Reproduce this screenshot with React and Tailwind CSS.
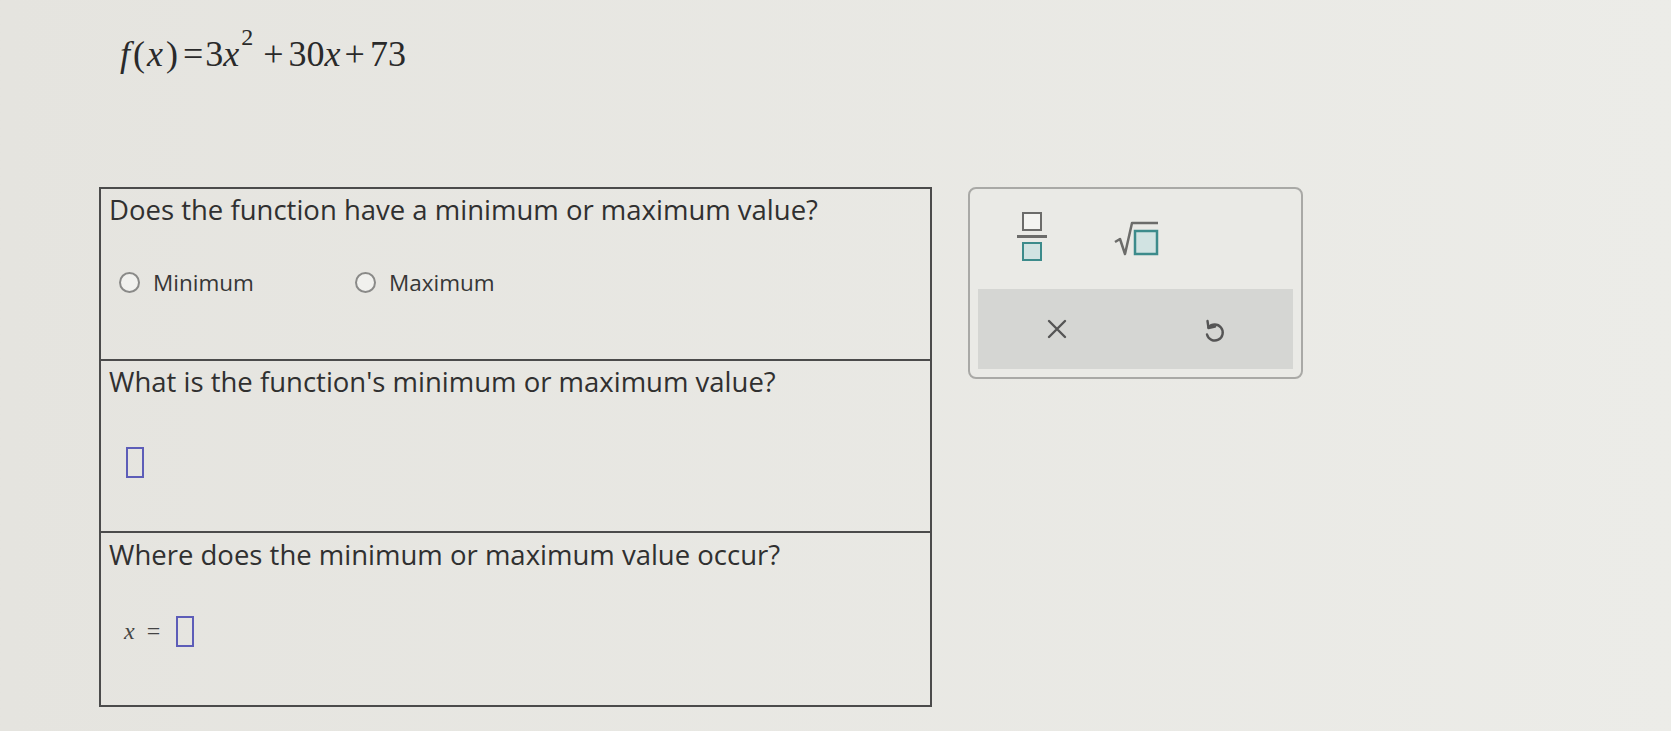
import React from "react";

const sans = { fontFamily: '"Open Sans", "DejaVu Sans", sans-serif' };
const serif = { fontFamily: '"Liberation Serif", "Times New Roman", serif' };

function Radio({ label }) {
  return (
    <div className="flex items-center gap-[13px]">
      <span className="w-[21px] h-[21px] rounded-full border-2 border-[#8a8a88] bg-[#f1f1ee]" />
      <span className="text-[22.5px] text-[#363636]" style={sans}>{label}</span>
    </div>
  );
}

function AnswerBox() {
  return <span className="inline-block w-[18px] h-[31px] border-2 border-[#5d5db8]" />;
}

export default function App() {
  return (
    <div className="w-[1671px] h-[731px] bg-gradient-to-r from-[#e5e4df] to-[#ecece8] overflow-hidden">
      <div className="pl-[120px] pt-[35px] h-[80px] text-[36px] leading-[38px] text-[#2a2a2a] flex items-baseline" style={serif}>
        <span className="italic">f</span>
        <span className="ml-[3px]">(</span>
        <span className="italic ml-[2px]">x</span>
        <span className="ml-[3px]">)</span>
        <span className="ml-[5px]">=</span>
        <span className="ml-[2px]">3</span>
        <span className="italic">x</span>
        <span className="text-[24px] relative -top-[21px] ml-[2px]">2</span>
        <span className="ml-[10px]">+</span>
        <span className="ml-[5px]">30</span>
        <span className="italic">x</span>
        <span className="ml-[4px]">+</span>
        <span className="ml-[5px]">73</span>
      </div>

      <div className="flex items-start pl-[99px] pt-[107px]">
        <div className="w-[833px] border-2 border-[#4b4b4b]">
          <div className="h-[172px] pl-[8px] pt-[4px] border-b-2 border-[#4b4b4b]">
            <div className="text-[27.5px] text-[#303030] leading-[34px]" style={sans}>
              Does the function have a minimum or maximum value?
            </div>
            <div className="flex items-center mt-[39px] pl-[10px]">
              <div className="w-[236px]"><Radio label="Minimum" /></div>
              <Radio label="Maximum" />
            </div>
          </div>
          <div className="h-[172px] pl-[8px] pt-[4px] border-b-2 border-[#4b4b4b]">
            <div className="text-[27.5px] text-[#303030] leading-[34px]" style={sans}>
              What is the function's minimum or maximum value?
            </div>
            <div className="mt-[48px] pl-[17px]">
              <AnswerBox />
            </div>
          </div>
          <div className="h-[172px] pl-[8px] pt-[5px]">
            <div className="text-[27.5px] text-[#303030] leading-[34px]" style={sans}>
              Where does the minimum or maximum value occur?
            </div>
            <div className="mt-[41px] pl-[15px] flex items-center gap-[16px]">
              <span className="text-[24px] text-[#444] flex items-center gap-[12px]" style={serif}>
                <span className="italic">x</span>
                <span>=</span>
              </span>
              <AnswerBox />
            </div>
          </div>
        </div>

        <div className="ml-[36px] w-[335px] h-[192px] rounded-[8px] border-2 border-[#a9a9a6] bg-[#eaeae6] p-[8px] flex flex-col">
          <div className="h-[92px] flex items-start pt-[15px]">
            <div className="ml-[39px] flex flex-col items-center">
              <span className="w-[20px] h-[19px] border-2 border-[#6c6c6a] bg-[#f4f4f1]" />
              <span className="w-[30px] h-[3px] bg-[#6c6c6a] my-[4px]" />
              <span className="w-[20px] h-[19px] border-2 border-[#3c8b8b] bg-[#d1e3e2]" />
            </div>
            <svg className="ml-[66px] mt-[8px]" width="46" height="38" viewBox="0 0 46 38">
              <path d="M2 22 L7 19 L12 34 L19 3 L45 3" fill="none" stroke="#6c6c6a" strokeWidth="2.5" strokeLinejoin="round" />
              <rect x="22" y="11" width="22" height="23" fill="#d1e3e2" stroke="#3c8b8b" strokeWidth="2.5" />
            </svg>
          </div>
          <div className="h-[80px] bg-[#d5d6d3] flex items-center">
            <svg className="ml-[69px]" width="20" height="20" viewBox="0 0 20 20">
              <path d="M2 2 L18 18 M18 2 L2 18" stroke="#555" strokeWidth="2.4" strokeLinecap="round" />
            </svg>
            <svg className="ml-[135px] mt-[4px]" width="24" height="26" viewBox="0 0 24 26">
              <path d="M6.5 9.5 A8 8 0 1 1 5 16.5" fill="none" stroke="#555" strokeWidth="2.4" strokeLinecap="round" />
              <path d="M5.5 3 L6.5 10 L13 8.5" fill="none" stroke="#555" strokeWidth="2.4" strokeLinecap="round" strokeLinejoin="round" />
            </svg>
          </div>
        </div>
      </div>
    </div>
  );
}
